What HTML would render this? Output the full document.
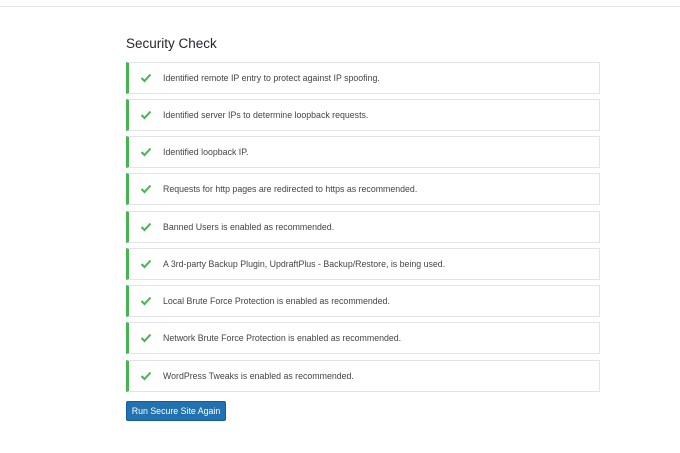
<!DOCTYPE html><html><head><style>
body{margin:0;width:680px;height:453px;background:#fff;font-family:"Liberation Sans",sans-serif;position:relative;overflow:hidden}
.top{position:absolute;left:0;top:6px;width:680px;height:1px;background:#e5e5e5}
h1{position:absolute;left:126px;top:36px;margin:0;font-size:13.5px;font-weight:normal;color:#23282d}
.b{position:absolute;left:126px;width:470px;height:30px;border:1px solid #e2e4e7;border-left:3px solid #46b450;background:#fff;font-size:8.8px;color:#444;line-height:30px}
.b svg{position:absolute;left:11px;top:10px}
.b span{position:absolute;left:34px}
.btn{position:absolute;left:126px;top:401px;width:100px;height:20px;background:#2271b1;border:1px solid #135e96;border-radius:2px;color:#fff;font-size:8.8px;line-height:18px;text-align:center;box-sizing:border-box}
</style></head><body>
<div class="top"></div>
<h1>Security Check</h1>
<div class="b" style="top:62px"><svg width="12" height="10" viewBox="0 0 12 10"><path d="M1.5 5l3 3L10.5 1.5" stroke="#46b450" stroke-width="2" fill="none"/></svg><span>Identified remote IP entry to protect against IP spoofing.</span></div>
<div class="b" style="top:99px"><svg width="12" height="10" viewBox="0 0 12 10"><path d="M1.5 5l3 3L10.5 1.5" stroke="#46b450" stroke-width="2" fill="none"/></svg><span>Identified server IPs to determine loopback requests.</span></div>
<div class="b" style="top:136px"><svg width="12" height="10" viewBox="0 0 12 10"><path d="M1.5 5l3 3L10.5 1.5" stroke="#46b450" stroke-width="2" fill="none"/></svg><span>Identified loopback IP.</span></div>
<div class="b" style="top:173px"><svg width="12" height="10" viewBox="0 0 12 10"><path d="M1.5 5l3 3L10.5 1.5" stroke="#46b450" stroke-width="2" fill="none"/></svg><span>Requests for http pages are redirected to https as recommended.</span></div>
<div class="b" style="top:211px"><svg width="12" height="10" viewBox="0 0 12 10"><path d="M1.5 5l3 3L10.5 1.5" stroke="#46b450" stroke-width="2" fill="none"/></svg><span>Banned Users is enabled as recommended.</span></div>
<div class="b" style="top:248px"><svg width="12" height="10" viewBox="0 0 12 10"><path d="M1.5 5l3 3L10.5 1.5" stroke="#46b450" stroke-width="2" fill="none"/></svg><span>A 3rd-party Backup Plugin, UpdraftPlus - Backup/Restore, is being used.</span></div>
<div class="b" style="top:285px"><svg width="12" height="10" viewBox="0 0 12 10"><path d="M1.5 5l3 3L10.5 1.5" stroke="#46b450" stroke-width="2" fill="none"/></svg><span>Local Brute Force Protection is enabled as recommended.</span></div>
<div class="b" style="top:322px"><svg width="12" height="10" viewBox="0 0 12 10"><path d="M1.5 5l3 3L10.5 1.5" stroke="#46b450" stroke-width="2" fill="none"/></svg><span>Network Brute Force Protection is enabled as recommended.</span></div>
<div class="b" style="top:360px"><svg width="12" height="10" viewBox="0 0 12 10"><path d="M1.5 5l3 3L10.5 1.5" stroke="#46b450" stroke-width="2" fill="none"/></svg><span>WordPress Tweaks is enabled as recommended.</span></div>
<div class="btn">Run Secure Site Again</div>
</body></html>
